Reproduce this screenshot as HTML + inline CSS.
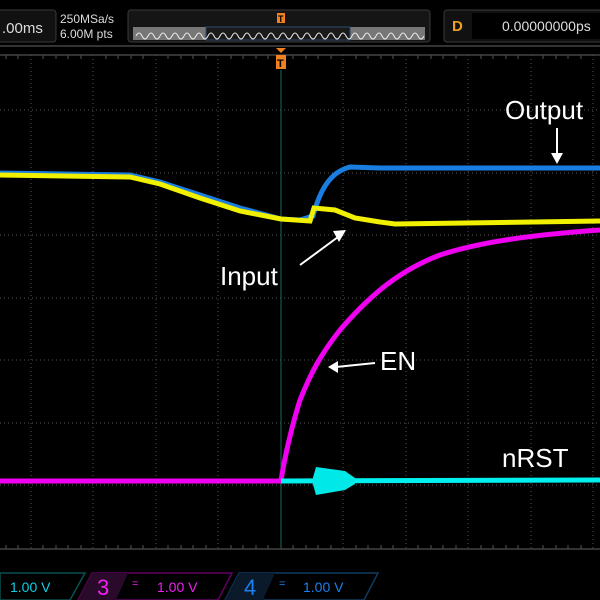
<!DOCTYPE html>
<html><head><style>
html,body{margin:0;padding:0;background:#000;width:600px;height:600px;overflow:hidden}
svg{display:block}
</style></head><body>
<svg width="600" height="600" viewBox="0 0 600 600" xmlns="http://www.w3.org/2000/svg" font-family="Liberation Sans, sans-serif">
<rect width="600" height="600" fill="#000"/>
<!-- header -->
<rect x="-5" y="10" width="61" height="32" rx="3" fill="#111" stroke="#3a3a3a"/>
<text x="2" y="33" fill="#ddd" font-size="15">.00ms</text>
<text x="60" y="23" fill="#ddd" font-size="12">250MSa/s</text>
<text x="60" y="38" fill="#ddd" font-size="12">6.00M pts</text>
<rect x="128" y="10" width="302" height="32" rx="3" fill="#151515" stroke="#3a3a3a"/>
<rect x="133" y="27" width="292" height="13" fill="#777"/>
<rect x="206" y="27" width="144" height="13" fill="#1a1a1a" stroke="#2a4a6a"/>
<path d="M136 36 q3 -6 6 0 t6 0 t6 0 t6 0 t6 0 t6 0 t6 0 t6 0 t6 0 t6 0 t6 0 t6 0 t6 0 t6 0 t6 0 t6 0 t6 0 t6 0 t6 0 t6 0 t6 0 t6 0 t6 0 t6 0 t6 0 t6 0 t6 0 t6 0 t6 0 t6 0 t6 0 t6 0 t6 0 t6 0 t6 0 t6 0 t6 0 t6 0 t6 0 t6 0 t6 0 t6 0 t6 0 t6 0 t6 0 t6 0 t6 0 t6 0" stroke="#eee" fill="none" stroke-width="1"/>
<rect x="277" y="13" width="8" height="10" fill="#f08020"/>
<text x="278" y="22" fill="#000" font-size="9" font-weight="bold">T</text>
<rect x="444" y="10" width="170" height="32" rx="3" fill="#111" stroke="#3a3a3a"/>
<rect x="472" y="13" width="140" height="26" fill="#000"/>
<text x="452" y="31" fill="#f0a020" font-size="15" font-weight="bold">D</text>
<text x="502" y="31" fill="#ddd" font-size="14">0.00000000ps</text>
<line x1="0" y1="46" x2="600" y2="46" stroke="#333" stroke-width="2"/>
<!-- grid -->
<g stroke="#555" stroke-width="1" stroke-dasharray="1 3">
<line x1="31" y1="55" x2="31" y2="549"/><line x1="93" y1="55" x2="93" y2="549"/>
<line x1="156" y1="55" x2="156" y2="549"/><line x1="218" y1="55" x2="218" y2="549"/>
<line x1="343" y1="55" x2="343" y2="549"/><line x1="406" y1="55" x2="406" y2="549"/>
<line x1="468" y1="55" x2="468" y2="549"/><line x1="531" y1="55" x2="531" y2="549"/>
<line x1="593" y1="55" x2="593" y2="549"/>
<line x1="0" y1="110" x2="600" y2="110"/><line x1="0" y1="173" x2="600" y2="173"/>
<line x1="0" y1="235" x2="600" y2="235"/><line x1="0" y1="298" x2="600" y2="298"/>
<line x1="0" y1="360" x2="600" y2="360"/><line x1="0" y1="423" x2="600" y2="423"/>
<line x1="0" y1="485" x2="600" y2="485"/>
</g>
<g stroke="#555" stroke-width="1">
<path d="M6 55v4M18 55v4M43 55v4M56 55v4M68 55v4M81 55v4M106 55v4M118 55v4M131 55v4M143 55v4M168 55v4M181 55v4M193 55v4M206 55v4M231 55v4M243 55v4M256 55v4M268 55v4M293 55v4M306 55v4M318 55v4M331 55v4M356 55v4M368 55v4M381 55v4M393 55v4M418 55v4M431 55v4M443 55v4M456 55v4M481 55v4M493 55v4M506 55v4M518 55v4M543 55v4M556 55v4M568 55v4M581 55v4"/>
<path d="M6 549v-4M18 549v-4M43 549v-4M56 549v-4M68 549v-4M81 549v-4M106 549v-4M118 549v-4M131 549v-4M143 549v-4M168 549v-4M181 549v-4M193 549v-4M206 549v-4M231 549v-4M243 549v-4M256 549v-4M268 549v-4M293 549v-4M306 549v-4M318 549v-4M331 549v-4M356 549v-4M368 549v-4M381 549v-4M393 549v-4M418 549v-4M431 549v-4M443 549v-4M456 549v-4M481 549v-4M493 549v-4M506 549v-4M518 549v-4M543 549v-4M556 549v-4M568 549v-4M581 549v-4"/>
</g>
<line x1="281" y1="70" x2="281" y2="549" stroke="#1a6a60" stroke-width="1"/>
<line x1="0" y1="55" x2="600" y2="55" stroke="#444" stroke-width="1.5"/>
<line x1="0" y1="549" x2="600" y2="549" stroke="#444" stroke-width="1.5"/>
<path d="M281 48 l5 0 l-5 5 l-5 -5z" fill="#f08020"/>
<rect x="276" y="55" width="10" height="14" fill="#f08020"/>
<text x="277" y="67" fill="#000" font-size="11" font-weight="bold">T</text>
<!-- traces -->
<path d="M0 173 L130 175 L160 182 L200 195 L240 208 L281 219 L300 220 L313 216 C320 190 330 172 350 167 L380 168 L600 168" stroke="#1a7ee0" stroke-width="5" fill="none"/>
<path d="M0 175 L130 177 L160 184 L200 198 L240 211 L281 219 L310 221 L314 208 L335 210 L355 218 L380 222 L395 224 L600 221" stroke="#f0f000" stroke-width="5" fill="none"/>
<path d="M0 481 L281 481 C284 460 292 425 300 400 C310 375 320 355 340 330 C370 295 400 270 440 255 C480 242 530 235 600 230" stroke="#f000f0" stroke-width="5" fill="none"/>
<path d="M281 481 L600 480" stroke="#00f0f0" stroke-width="5" fill="none"/>
<path d="M312 481 L316 467 L345 471 L355 478 L355 484 L345 490 L316 495z" fill="#00e8e8"/>
<!-- labels -->
<g fill="#fff" font-size="26">
<text x="505" y="119">Output</text>
<text x="220" y="285">Input</text>
<text x="380" y="370">EN</text>
<text x="502" y="467">nRST</text>
</g>
<g stroke="#fff" stroke-width="2" fill="#fff">
<line x1="557" y1="128" x2="557" y2="155"/><path d="M551 153 L563 153 L557 164z" stroke="none"/>
<line x1="300" y1="265" x2="338" y2="237"/><path d="M333 231 L346 230 L339 242z" stroke="none"/>
<line x1="375" y1="363" x2="336" y2="367"/><path d="M338 361 L328 367 L338 373z" stroke="none"/>
</g>
<!-- bottom channel tabs -->
<path d="M0 573 L85 573 L70 600 L0 600z" fill="#000" stroke="#0a5050" stroke-width="1.5"/>
<text x="10" y="592" fill="#10d0e0" font-size="14">1.00 V</text>
<path d="M92 573 L232 573 L218 600 L78 600z" fill="#000" stroke="#600060" stroke-width="1.5"/>
<path d="M92 573 L128 573 L116 600 L78 600z" fill="#2a0a2a"/>
<text x="97" y="595" fill="#f020f0" font-size="22">3</text>
<text x="132" y="587" fill="#f020f0" font-size="11">=</text>
<text x="157" y="592" fill="#f020f0" font-size="14">1.00 V</text>
<path d="M239 573 L378 573 L364 600 L225 600z" fill="#000" stroke="#103a60" stroke-width="1.5"/>
<path d="M239 573 L275 573 L263 600 L225 600z" fill="#0a1a2a"/>
<text x="244" y="595" fill="#1a80f0" font-size="22">4</text>
<text x="279" y="587" fill="#1a80f0" font-size="11">=</text>
<text x="303" y="592" fill="#1a80f0" font-size="14">1.00 V</text>
</svg>
</body></html>
